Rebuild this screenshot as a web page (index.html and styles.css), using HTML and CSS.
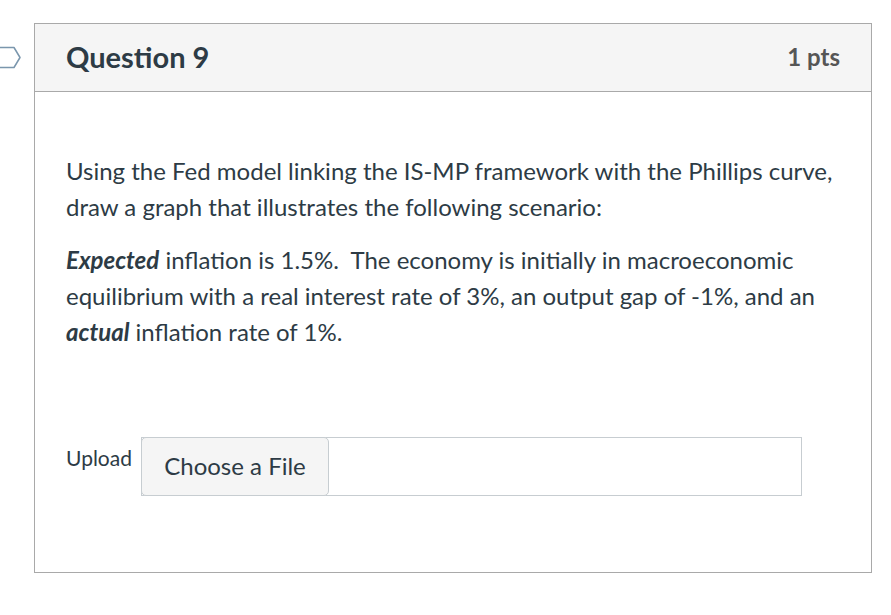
FILE: index.html
```html
<!DOCTYPE html>
<html>
<head>
<meta charset="utf-8">
<link rel="stylesheet" href="styles.css">
</head>
<body>
<div class="page">
  <div class="flag-col">
    <svg class="flag" width="22" height="23" viewBox="0 0 22 23">
      <path d="M-4 1.5 H14 L20 11.5 L14 21.5 H-4" fill="none" stroke="#7a96ad" stroke-width="1.5" stroke-linejoin="round"/>
    </svg>
  </div>
  <div class="card">
    <div class="card-header">
      <h2 class="title">Question 9</h2>
      <span class="pts">1 pts</span>
    </div>
    <div class="card-body">
      <p class="para">Using the Fed model linking the IS-MP framework with the Phillips curve, draw a graph that illustrates the following scenario:</p>
      <p class="para"><strong><em>Expected</em></strong> inflation is 1.5%.&nbsp; The economy is initially in macroeconomic equilibrium with a real interest rate of 3%, an output gap of -1%, and an <strong><em>actual</em></strong> inflation rate of 1%.</p>
      <div class="upload-row">
        <span class="upload-label">Upload</span>
        <div class="file-box">
          <span class="file-btn">Choose a File</span>
        </div>
      </div>
    </div>
  </div>
</div>
</body>
</html>
```
FILE: styles.css
```css
html, body {
  margin: 0;
  padding: 0;
  background: #fff;
}
body {
  font-family: Lato, "Noto Sans", sans-serif;
  color: #2d3b45;
}
.page {
  display: flex;
  align-items: flex-start;
  padding-top: 23px;
}
.flag-col {
  width: 34px;
  flex: none;
  padding-top: 23px;
}
.flag {
  display: block;
}
.card {
  width: 838px;
  height: 550px;
  box-sizing: border-box;
  border: 1px solid #a9a9a9;
  display: flex;
  flex-direction: column;
}
.card-header {
  height: 68px;
  box-sizing: border-box;
  background: #f5f5f5;
  border-bottom: 1px solid #a9a9a9;
  display: flex;
  align-items: center;
  justify-content: space-between;
  padding: 0 31px 3px 31px;
}
.title {
  margin: 0;
  font-size: 29px;
  font-weight: 700;
  color: #2d3b45;
}
.pts {
  font-size: 24px;
  font-weight: 700;
  color: #565656;
}
.card-body {
  padding: 61px 31px 0 31px;
}
.para {
  margin: 0 0 17px 0;
  font-size: 24px;
  line-height: 36px;
}
.upload-row {
  display: flex;
  align-items: flex-start;
  margin-top: 87px;
}
.upload-label {
  font-size: 21px;
  line-height: 28px;
  padding-top: 7px;
  width: 75px;
  flex: none;
}
.file-box {
  width: 661px;
  height: 59px;
  box-sizing: border-box;
  border: 1px solid #c7cdd1;
  display: flex;
}
.file-btn {
  width: 188px;
  box-sizing: border-box;
  margin: -1px 0 -1px -1px;
  padding-bottom: 3px;
  background: #f5f5f5;
  border: 1px solid #c7cdd1;
  border-radius: 5px;
  display: flex;
  align-items: center;
  justify-content: center;
  font-size: 24px;
  color: #2d3b45;
}
```
